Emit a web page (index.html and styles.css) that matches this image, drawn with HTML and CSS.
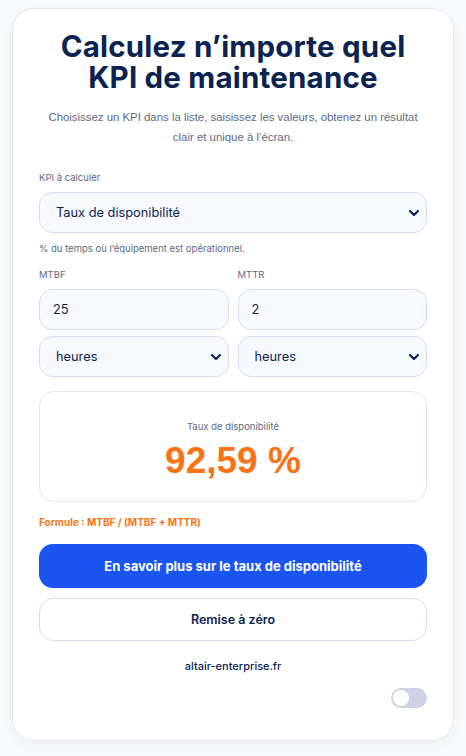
FILE: index.html
```html
<!DOCTYPE html>
<html lang="fr">
<head>
    <meta charset="UTF-8">
    <meta name="viewport" content="width=device-width, initial-scale=1.0">
    <title>Calculateur KPI maintenance</title>
    <link rel="stylesheet" href="styles.css">
</head>
<body>
    <div class="card">
        <h1>Calculez n’importe quel KPI de maintenance</h1>
        <p class="lead">Choisissez un KPI dans la liste, saisissez les valeurs, obtenez un résultat clair et unique à l’écran.</p>

        <label class="label" for="kpi">KPI à calculer</label>
        <select id="kpi" class="field">
            <option>Taux de disponibilité</option>
        </select>
        <p class="hint">% du temps où l’équipement est opérationnel.</p>

        <div class="grid">
            <div class="col">
                <label class="label" for="mtbf">MTBF</label>
                <input id="mtbf" class="field" type="text" value="25">
                <select class="field"><option>heures</option></select>
            </div>
            <div class="col">
                <label class="label" for="mttr">MTTR</label>
                <input id="mttr" class="field" type="text" value="2">
                <select class="field"><option>heures</option></select>
            </div>
        </div>

        <div class="result">
            <div class="result-label">Taux de disponibilité</div>
            <div class="result-value">92,59 %</div>
        </div>
        <p class="formula">Formule : MTBF / (MTBF + MTTR)</p>

        <button class="btn btn-primary">En savoir plus sur le taux de disponibilité</button>
        <button class="btn btn-ghost">Remise à zéro</button>

        <p class="site">altair-enterprise.fr</p>
        <div class="toggle-row">
            <span class="toggle"><span class="knob"></span></span>
        </div>
    </div>
</body>
</html>
```

FILE: styles.css
```css
* {
    margin: 0;
    padding: 0;
    box-sizing: border-box;
}
body {
    background: #f8f9fc;
    font-family: Inter, "Noto Sans", sans-serif;
    color: #0b2350;
    padding: 8px 12px 16px;
}
.card {
    background: #fff;
    border: 1px solid #e1e6f7;
    border-radius: 22px;
    padding: 22px 26px 32px;
    display: flex;
    flex-direction: column;
    box-shadow: 0 4px 14px rgba(20, 30, 80, 0.04);
}
h1 {
    font-size: 29.5px;
    line-height: 31px;
    font-weight: 700;
    text-align: center;
    color: #0b2350;
    letter-spacing: 0.2px;
    padding: 0 10px;
}
.lead {
    margin-top: 14px;
    font-family: "Liberation Sans", Arial, sans-serif;
    font-size: 11.4px;
    line-height: 20px;
    color: #5d6884;
    text-align: center;
}
.label {
    display: block;
    font-size: 9.5px;
    color: #5d6884;
    margin-top: 25px;
    margin-bottom: 9px;
}
.field {
    display: block;
    width: 100%;
    height: 41px;
    border: 1px solid #d4ddf8;
    border-radius: 13px;
    background: #f7f9ff;
    font-family: Inter, "Noto Sans", sans-serif;
    font-size: 12.8px;
    color: #0b2350;
    padding: 0 16px;
    outline: none;
    appearance: none;
    background-image: url("data:image/svg+xml,%3Csvg xmlns='http://www.w3.org/2000/svg' width='12' height='8' viewBox='0 0 12 8'%3E%3Cpath d='M2 2l4 4 4-4' fill='none' stroke='%230b2350' stroke-width='2.2' stroke-linecap='round' stroke-linejoin='round'/%3E%3C/svg%3E");
    background-repeat: no-repeat;
    background-position: right 6px center;
}
input.field {
    background-image: none;
    padding-left: 13px;
}
.hint {
    font-size: 9.5px;
    color: #5d6884;
    margin-top: 10px;
}
.grid {
    display: grid;
    grid-template-columns: 1fr 1fr;
    gap: 9px;
}
.col .label {
    margin-top: 15px;
}
.col select.field {
    margin-top: 6px;
}
.result {
    margin-top: 14px;
    border: 1px solid #e1e6f7;
    border-radius: 15px;
    height: 111px;
    display: flex;
    flex-direction: column;
    align-items: center;
    justify-content: center;
    padding-top: 10px;
}
.result-label {
    font-size: 9.5px;
    color: #5d6884;
}
.result-value {
    font-family: "Liberation Sans", Arial, sans-serif;
    font-size: 37px;
    font-weight: 700;
    color: #f97316;
    margin-top: 8px;
}
.formula {
    margin-top: 14px;
    font-size: 10px;
    font-weight: 700;
    color: #f97316;
}
.btn {
    width: 100%;
    height: 44px;
    border-radius: 14px;
    font-family: Inter, "Noto Sans", sans-serif;
    font-size: 13px;
    font-weight: 700;
    cursor: pointer;
}
.btn-primary {
    margin-top: 16px;
    background: #1a55f2;
    color: #fff;
    border: none;
}
.btn-ghost {
    margin-top: 10px;
    background: #fff;
    color: #0b2350;
    border: 1px solid #d4ddf8;
    font-size: 12.5px;
    font-weight: 600;
    height: 43px;
}
.site {
    margin-top: 18px;
    text-align: center;
    font-size: 11px;
    font-weight: 500;
    color: #0b2350;
}
.toggle-row {
    display: flex;
    justify-content: flex-end;
    margin-top: 15px;
}
.toggle {
    width: 36px;
    height: 20px;
    border-radius: 10px;
    background: #cdd3e4;
    position: relative;
}
.knob {
    position: absolute;
    left: 2px;
    top: 2px;
    width: 16px;
    height: 16px;
    border-radius: 50%;
    background: #fff;
}
```
